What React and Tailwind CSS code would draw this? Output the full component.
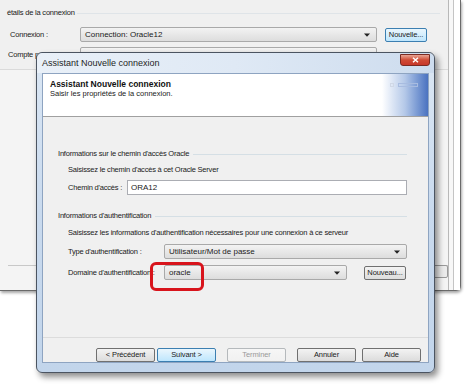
import React from "react";

const font = { fontFamily: '"Liberation Sans", Arial, sans-serif' };

function Arrow() {
  return (
    <svg width="6" height="4" viewBox="0 0 6 4" className="shrink-0">
      <path d="M0 0.5 L6 0.5 L3 3.8 Z" fill="#222" />
    </svg>
  );
}

function Combo({ text, w, h = 15 }) {
  return (
    <div
      className="flex items-center justify-between border border-[#a9a9a9] rounded-[2px] bg-gradient-to-b from-[#f3f3f3] to-[#dddddd] pl-[4px] pr-[6px] text-[8px] text-[#1a1a1a] shrink-0"
      style={{ width: w, height: h }}
    >
      <span className="leading-none">{text}</span>
      <Arrow />
    </div>
  );
}

function Btn({ children, variant = "normal", w = 59 }) {
  const cls =
    variant === "focus"
      ? "border-[#3c7fb1] from-[#eaf6fd] to-[#bee6fd] text-[#1a1a1a]"
      : variant === "disabled"
      ? "border-[#b5b9bc] from-[#f6f6f6] to-[#f1f1f1] text-[#9a9a9a]"
      : "border-[#707070] from-[#f3f3f3] to-[#dcdcdc] text-[#1a1a1a]";
  return (
    <div
      className={`h-[14px] flex items-center justify-center border rounded-[2px] bg-gradient-to-b text-[7.5px] tracking-[-0.1px] leading-none shrink-0 ${cls}`}
      style={{ width: w }}
    >
      {children}
    </div>
  );
}

const T = "text-[7.5px] tracking-[-0.2px] leading-none whitespace-nowrap";

export default function App() {
  return (
    <div
      className="relative w-[474px] h-[386px] bg-white overflow-hidden text-[#1a1a1a]"
      style={font}
    >
      {/* Background window */}
      <div className="w-[461px] h-[291px] flex bg-[#f0f0f0] border-r border-b border-[#6a6a6a] rounded-br-[5px] shadow-[1px_2px_3px_rgba(0,0,0,0.35)]">
        <div className="w-[448px] flex flex-col">
          <div className="h-[70px] pl-[5px] pt-[8px] border-b border-[#dadada] flex flex-col">
            <div className="flex items-center h-[10px]">
              <span className={`${T} pl-[2px]`}>étails de la connexion</span>
              <div className="flex-1 h-px bg-[#dfe4e8] ml-[2px] mr-[8px]"></div>
            </div>
            <div className="flex items-center mt-[9px] h-[15px]">
              <span className={`w-[75px] pl-[5px] ${T}`}>Connexion :</span>
              <Combo text="Connection: Oracle12" w={297} />
              <div className="ml-[8px]">
                <Btn variant="focus" w={42}>Nouvelle...</Btn>
              </div>
            </div>
            <div className="flex items-center mt-[5px] h-[15px]">
              <span className={`w-[75px] pl-[3px] ${T}`}>Compte par défaut :</span>
              <Combo text="(Néant)" w={297} />
            </div>
          </div>
          <div className="flex-1 bg-[#f4f4f4] flex flex-col">
            <div className="mt-[195px] ml-[8px] h-px bg-[#c8c8c8] w-[440px]"></div>
            <div className="flex justify-end mt-[-1px]">
              <div className="w-[15px] h-[13px] border border-[#9a9a9a] rounded-[2px] bg-[#ececec]"></div>
            </div>
          </div>
        </div>
        <div className="flex-1 flex">
          <div className="w-px bg-[#b8b8b8]"></div>
          <div className="w-[4px] bg-[#f7f7f7]"></div>
          <div className="w-px bg-[#c4c4c4]"></div>
          <div className="flex-1 bg-white"></div>
        </div>
      </div>

      {/* Dialog */}
      <div className="absolute left-[36px] top-[52px] w-[399px] h-[321px] rounded-[6px] border border-[#4b5461] bg-gradient-to-b from-[#dbe7f4] via-[#c9daee] to-[#c2d5eb] flex flex-col shadow-[3px_4px_6px_rgba(0,0,0,0.45)]">
        {/* Title bar */}
        <div className="h-[20px] flex items-center justify-between pl-[5px] pr-[4px] bg-gradient-to-r from-[#e9f0f8] via-[#dfe9f5] to-[#cddcee] rounded-t-[6px]">
          <span className="text-[9px] leading-none text-[#1e1e1e] whitespace-nowrap">Assistant Nouvelle connexion</span>
          <div className="w-[30px] h-[12px] -mt-[7px] rounded-b-[3px] border border-[#7a2a22] bg-gradient-to-b from-[#e8a393] via-[#cf4a35] to-[#c7372a] flex items-center justify-center">
            <svg width="7" height="6" viewBox="0 0 7 6">
              <path d="M1 0.8 L6 5.2 M6 0.8 L1 5.2" stroke="white" strokeWidth="1.5" />
            </svg>
          </div>
        </div>
        {/* Content */}
        <div className="flex-1 mx-[5px] border border-[#8ea4c1] bg-[#f0f0f0] flex flex-col">
          {/* Header */}
          <div className="h-[43px] flex bg-white border-b border-[#a0a0a0]">
            <div className="flex-1 pl-[7px] pt-[5px] flex flex-col">
              <span className="text-[8.5px] font-bold leading-[10px] text-[#111] whitespace-nowrap">Assistant Nouvelle connexion</span>
              <span className="text-[7.5px] leading-[10px] whitespace-nowrap">Saisir les propriétés de la connexion.</span>
            </div>
            <div className="w-[46px] bg-gradient-to-r from-white via-[#b4c8e8] to-[#4a72c0] relative">
              <div className="absolute left-[8px] top-[9px] w-[4px] h-[4px] border border-[#d0d8e6]"></div>
              <div className="absolute left-[16px] top-[9px] w-[20px] h-[4px] border border-[#a8bce0]"></div>
            </div>
          </div>
          {/* Body */}
          <div className="flex-1 flex flex-col pl-[15px] relative">
            <div className="mt-[32px] h-[10px] flex items-center pr-[21px]">
              <span className={T}>Informations sur le chemin d'accès Oracle</span>
              <div className="flex-1 h-px bg-[#d5dfe5] ml-[4px]"></div>
            </div>
            <div className="mt-[6px] h-[10px] pl-[10px] flex items-center">
              <span className={T}>Saisissez le chemin d'accès à cet Oracle Server</span>
            </div>
            <div className="mt-[5px] h-[15px] pl-[10px] flex items-center">
              <span className={`w-[59px] ${T}`}>Chemin d'accès :</span>
              <div className="w-[280px] h-[15px] border border-[#abadb3] bg-white flex items-center pl-[3px] text-[8px] leading-none">
                ORA12
              </div>
            </div>
            <div className="mt-[16px] h-[10px] flex items-center pr-[21px]">
              <span className={T}>Informations d'authentification</span>
              <div className="flex-1 h-px bg-[#d5dfe5] ml-[4px]"></div>
            </div>
            <div className="mt-[7px] h-[10px] pl-[10px] flex items-center">
              <span className={T}>
                Saisissez les informations d'authentification nécessaires pour une connexion à ce serveur
              </span>
            </div>
            <div className="mt-[6px] h-[15px] pl-[10px] flex items-center">
              <span className={`w-[96px] ${T}`}>Type d'authentification :</span>
              <Combo text="Utilisateur/Mot de passe" w={243} />
            </div>
            <div className="mt-[6px] h-[15px] pl-[10px] flex items-center">
              <span className={`w-[96px] ${T}`}>Domaine d'authentification :</span>
              <Combo text="oracle" w={183} />
              <div className="ml-[17px]">
                <Btn w={42}>Nouveau...</Btn>
              </div>
            </div>
            {/* Red highlight */}
            <div className="absolute left-[107px] top-[145px] w-[54px] h-[29px] border-[3px] border-[#d8141c] rounded-[6px]"></div>
          </div>
          {/* Footer */}
          <div className="h-[25px] border-t border-[#dcdcdc] flex items-start pt-[10px] pl-[53px] pr-[7px] gap-0">
            <Btn>&lt; Précédent</Btn>
            <div className="ml-[2px]"><Btn variant="focus">Suivant &gt;</Btn></div>
            <div className="ml-[11px]"><Btn variant="disabled">Terminer</Btn></div>
            <div className="ml-[11px]"><Btn>Annuler</Btn></div>
            <div className="ml-[6px]"><Btn>Aide</Btn></div>
          </div>
        </div>
        <div className="h-[9px]"></div>
      </div>
    </div>
  );
}
